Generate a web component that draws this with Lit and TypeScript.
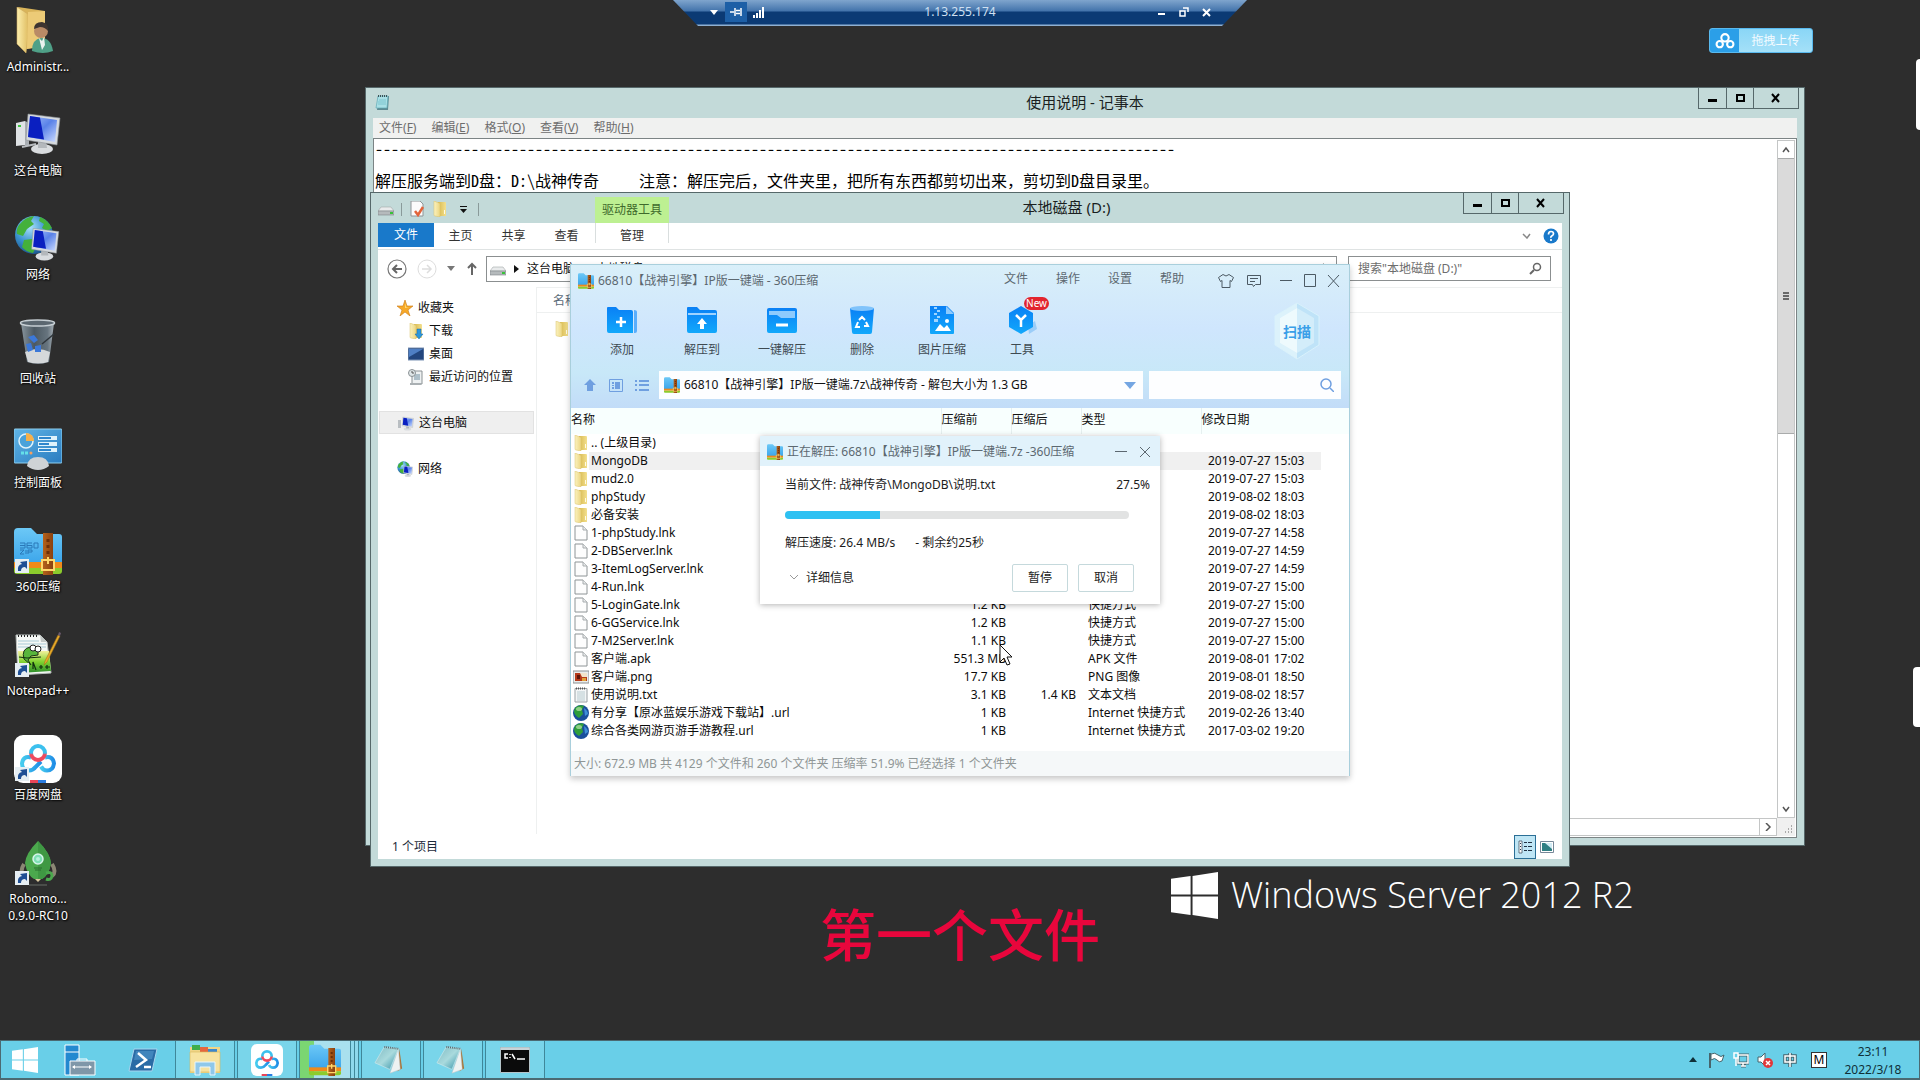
import { LitElement, html, svg, css, nothing, TemplateResult } from "lit";
import { customElement } from "lit/decorators.js";
import { classMap } from "lit/directives/class-map.js";

/* ---------- shared styles ---------- */

const base = css`
  * { box-sizing: border-box; }
  :host {
    display: block;
    font: 12px/16px "Noto Sans", "Noto Sans CJK SC", sans-serif;
    color: #111;
  }
  button {
    font: inherit;
    color: inherit;
    background: none;
    border: 0;
    padding: 0;
    margin: 0;
    display: flex;
    align-items: center;
    justify-content: center;
  }
  input, textarea { font: inherit; color: inherit; border: 0; outline: 0; padding: 0; margin: 0; background: none; }
  svg { display: block; flex: none; }
`;

const frame = css`
  .window {
    height: 100%;
    display: flex;
    flex-direction: column;
    background: #c3dad9;
    border: 1px solid #56686a;
    padding: 0 7px 7px;
  }
  .title {
    flex: none;
    position: relative;
    height: 30px;
    padding-bottom: 2px;
    display: flex;
    align-items: center;
    justify-content: center;
    font-size: 15px;
    line-height: 20px;
    color: #1a1f1f;
  }
  .caption {
    position: absolute;
    top: 0;
    right: -2px;
    display: flex;
    border: 1px solid #56686a;
    border-top: 0;
  }
  .caption button { width: 27px; height: 20px; border-right: 1px solid #56686a; }
  .caption button:first-child { width: 28px; }
  .caption button:last-child { width: 44px; border-right: 0; }
`;

/* ---------- icons ---------- */

const pic = (w: number, h: number, vb: string, body: TemplateResult | TemplateResult[]) =>
  html`<svg width=${w} height=${h} viewBox=${vb} aria-hidden="true">${body}</svg>`;

const captionButtons = () => html`
  <div class="caption">
    <button aria-label="最小化">${pic(11, 12, "0 0 11 12", svg`<path d="M1 7h9v3H1z" fill="#000"/>`)}</button>
    <button aria-label="最大化">${pic(12, 12, "0 0 12 12", svg`<path d="M3 3h7v6H3z" fill="none" stroke="#000" stroke-width="2"/>`)}</button>
    <button aria-label="关闭">${pic(12, 12, "0 0 12 12", svg`<path d="M2 2l7 8M9 2l-7 8" stroke="#000" stroke-width="2"/>`)}</button>
  </div>`;

const zipBody = svg`
  <defs>
    <linearGradient id="zipBlue" x1="0" y1="0" x2="0" y2="1"><stop offset="0" stop-color="#6cc8f6"/><stop offset="1" stop-color="#3aa4ea"/></linearGradient>
    <linearGradient id="zipBelt" x1="0" y1="0" x2="1" y2="0"><stop offset="0" stop-color="#b4611b"/><stop offset="1" stop-color="#8a4210"/></linearGradient>
  </defs>
  <path d="M0 5q0-4 4-4h13l6 6h22q3 0 3 3v28H0z" fill="url(#zipBlue)"/>
  <path d="M0 35h48v6H0z" fill="#f08a1a"/>
  <path d="M0 41h48v3q0 3-3 3H3q-3 0-3-3z" fill="#8ccc2c"/>
  <path d="M29 6h10v42H29z" fill="url(#zipBelt)"/>
  <path d="M34 12v3M34 18v3M34 24v3" stroke="#6d2f08" stroke-width="3"/>
  <path d="M28 33h12v10H28zM34 30v7" fill="none" stroke="#ffd76a" stroke-width="2"/>`;

const zipIcon = (s: number) => pic(s, s, "0 0 48 48", zipBody);

const baiduRings = svg`
  <defs>
    <linearGradient id="bdRing" x1="0" y1="0" x2="0" y2="1"><stop offset="0" stop-color="#3cc0ee"/><stop offset=".5" stop-color="#3cc0ee"/><stop offset=".62" stop-color="#ee4a5e"/><stop offset="1" stop-color="#ee4a5e"/></linearGradient>
    <linearGradient id="bdWing" x1="0" y1="0" x2="1" y2="0"><stop offset="0" stop-color="#46cbee"/><stop offset="1" stop-color="#1f8de6"/></linearGradient>
  </defs>
  <path d="M17 22.500q-8-2-9 6q0 7 7 7q4 0 7-4l5-5" fill="none" stroke="url(#bdWing)" stroke-width="4"/>
  <path d="M31 22.500q8-2 9 6q-1 7-7 7q-4 0-6-4" fill="none" stroke="url(#bdWing)" stroke-width="4"/>
  <circle cx="24" cy="18" r="7" fill="none" stroke="url(#bdRing)" stroke-width="4"/>`;

const baiduBody = svg`
  <rect width="48" height="48" rx="9" fill="#fff"/>
  ${baiduRings}
  <path d="M16 45h8v3h-8z" fill="#ea4558"/><path d="M24 45h8v3h-8z" fill="#2b7de0"/>`;

const shortcut = svg`
  <path d="M1 32h14v14H1z" fill="#e6eef3"/>
  <path d="M4 44q-1-6 4-7l-2-2l7-1v8l-2-2q-4 0-4 4z" fill="#1f4f94"/>`;

const monitor = svg`
  <defs>
    <linearGradient id="screen" x1="0" y1="0" x2="1" y2="1"><stop offset="0" stop-color="#a9c4ff"/><stop offset=".5" stop-color="#5a82e8"/><stop offset="1" stop-color="#cddcff"/></linearGradient>
  </defs>
  <ellipse cx="28" cy="38" rx="11" ry="5" fill="#d9dcdf"/>
  <path d="M24 30h8l1 7h-9z" fill="#b4b8bc"/>
  <path d="M14 3l32 4l-3 27l-31-5z" fill="#d6dade" stroke="#8c9196" stroke-width=".6"/>
  <path d="M16 5l27 4l-2 22l-27-5z" fill="url(#screen)"/>
  <path d="M16 5l10 1.500l4 22l-16-2.500z" fill="#0a1fc0"/>`;

const globe = svg`
  <defs><radialGradient id="sea" cx=".4" cy=".3" r=".8"><stop offset="0" stop-color="#a8e0fa"/><stop offset=".5" stop-color="#3b93cf"/><stop offset="1" stop-color="#12467e"/></radialGradient></defs>
  <circle cx="20" cy="20" r="19" fill="url(#sea)"/>
  <path d="M5 10q6-8 15-9l-3 5l3 3l-7 5l-4 7l-6-2q-1-5 2-9zM26 2q8 3 12 11l-5 3l-5-3l2-4l-5-3zM10 25l8-1l5 6l-4 8q-7-1-11-6z" fill="#44b13b"/>`;

const folderBody = svg`
  <defs>
    <linearGradient id="foldFront" x1="0" y1="0" x2="1" y2="0"><stop offset="0" stop-color="#fbf2bf"/><stop offset="1" stop-color="#ecd681"/></linearGradient>
    <linearGradient id="foldBack" x1="0" y1="0" x2="1" y2="0"><stop offset="0" stop-color="#d8b94f"/><stop offset="1" stop-color="#f3e08e"/></linearGradient>
  </defs>
  <path d="M6 1h7q1 0 1 1v13H6z" fill="url(#foldBack)"/>
  <path d="M2 0l5 2q1 0 1 1v13l-5-1q-1 0-1-1z" fill="url(#foldFront)" stroke="#d9c069" stroke-width=".5"/>
  <path d="M12 9h1v4h-1z" fill="#fffbe4"/>`;

const desktopPics: Record<string, TemplateResult> = {
  user: svg`
    <defs><linearGradient id="ufold" x1="0" y1="0" x2="1" y2="0"><stop offset="0" stop-color="#fcefae"/><stop offset="1" stop-color="#e0bd62"/></linearGradient></defs>
    <path d="M4 0l27 4v36l-19 2z" fill="#d9b45a"/>
    <path d="M3 0l11 7q1 20-2 39l-9-9z" fill="url(#ufold)" stroke="#cda95c" stroke-width=".6"/>
    <path d="M14 5l17-1v34l-18 4z" fill="#eccb77"/>
    <path d="M18 44q0-12 9-13q10 0 12 13q-10 4-21 0z" fill="#4fa087"/>
    <path d="M25 31l3 3l2-4l1 8l-3 5z" fill="#e9f2ee"/>
    <circle cx="27" cy="24" r="7" fill="#b98b66"/>
    <path d="M20 22q0-7 8-7q7 1 6 9q-3-4-8-4z" fill="#3d3430"/>`,
  pc: svg`
    <path d="M2 12l9-2v24l-9 1z" fill="#dfe2e5"/><path d="M11 10l4 2v22l-4 1z" fill="#a9aeb3"/>
    <path d="M4 15h3" stroke="#3ec43e" stroke-width="2"/><path d="M8 36l14-3" stroke="#b8bcc0" stroke-width="2"/>
    ${monitor}`,
  net: svg`
    ${globe}<g transform="translate(8 11) scale(.8)">${monitor}</g>`,
  bin: svg`
    <defs><linearGradient id="glass" x1="0" y1="0" x2="1" y2="0"><stop offset="0" stop-color="#93a1aa"/><stop offset=".4" stop-color="#4f5d67"/><stop offset=".8" stop-color="#6d7c87"/><stop offset="1" stop-color="#b2bcc3"/></linearGradient></defs>
    <path d="M7 4h33l-5 39q-11 4-22 0z" fill="url(#glass)" opacity=".9"/>
    <path d="M11 33q12-6 25 0l-2 10q-10 3-20 0z" fill="#d5d8da"/>
    <ellipse cx="23.500" cy="4" rx="17" ry="3" fill="#5b6770" stroke="#c6ced3" stroke-width="1.500"/>
    <path d="M14 18l6-2l4 5l-4 3zM12 25l5-1l2 7l-5 2zM21 27l6-1v7h-6z" fill="#3c78d8"/>
    <path d="M40 15l-12 10" stroke="#2f363b" stroke-width="1.500"/>`,
  panel: svg`
    <defs><linearGradient id="cp" x1="0" y1="0" x2="1" y2="1"><stop offset="0" stop-color="#5fb4e6"/><stop offset="1" stop-color="#2a7cc0"/></linearGradient></defs>
    <rect x="0" y="6" width="48" height="34" rx="1" fill="url(#cp)" stroke="#8fd0f0"/>
    <circle cx="12" cy="18" r="7" fill="#4aa2da" stroke="#dff2fb" stroke-width="1.500"/>
    <path d="M12 18v-8a8 8 0 0 1 8 8z" fill="#f6b04a"/>
    <path d="M24 15h19M24 21h19M24 27h19" stroke="#dff2fb" stroke-width="4"/>
    <path d="M25 15h12M25 21h10M25 27h12" stroke="#2e86cc" stroke-width="2"/>
    <path d="M7 30h7" stroke="#64e0e8" stroke-width="3" stroke-dasharray="3 1"/><circle cx="17" cy="30" r="1.500" fill="#f6a060"/>
    <path d="M13 43q1-9 11-9t11 9q-5 4-11 4t-11-4z" fill="#cfd3d6"/>`,
  zip: svg`
    ${zipBody}
    <path d="M6 16h5v5H6M6 18.500h5M18 16h-5v5h5v-2.500h-5M20 16h4v5h-4zM6 23h4l-4 4h4M12 23v4M14 27v-4h4v2h-4" fill="none" stroke="#2a78b8"/>
    ${shortcut}`,
  npp: svg`
    <defs><linearGradient id="npg" x1="0" y1="0" x2="0" y2="1"><stop offset="0" stop-color="#f4f19c"/><stop offset=".5" stop-color="#7fd22f"/><stop offset="1" stop-color="#2a8c2c"/></linearGradient></defs>
    <path d="M2 4h24l7 7l4 31l-33 2z" fill="#f6f8f6" stroke="#b9bfbd"/>
    <path d="M26 4l1 7h6z" fill="#c3c9c7"/>
    <path d="M4 5h20" stroke="#222" stroke-width="2" stroke-dasharray="1 2"/>
    <path d="M4 10h21M4 13h28M4 16h28" stroke="#a9cbd6"/>
    <path d="M4 20h31l2 20l-31 2z" fill="url(#npg)"/>
    <path d="M10 28q-3-10 6-12l8 2v6l-7 1l-3 4l3 5z" fill="#58b53c" stroke="#1c3316"/>
    <circle cx="19" cy="17" r="3" fill="#fff" stroke="#222"/><circle cx="24" cy="18" r="3" fill="#fff" stroke="#222"/>
    <path d="M5 26l8 1l14-1M19 38v-7l3 8M25 36h4M31 36h5M27 34v4M33 34v4" fill="none" stroke="#12300f" stroke-width="1.200"/>
    <path d="M44 4l2 1l-13 26l-3 3l1-4z" fill="#e6a92a" stroke="#9c6c14" stroke-width=".5"/><path d="M44 4l1-3l2 1l-1 3z" fill="#6b5a6d"/>
    ${shortcut}`,
  baidu: svg`${baiduBody}${shortcut}`,
  robo: svg`
    <path d="M10 25q-5 8 0 14M38 25q5 8 0 12" fill="none" stroke="#8b8774" stroke-width="4"/>
    <path d="M24 2q12 12 13 22q-2 12-9 16h-8q-7-4-9-16q1-10 13-22z" fill="#4ba84d"/>
    <path d="M24 2q12 12 13 22q-2 12-9 16h-4z" fill="#3f9843"/>
    <circle cx="24" cy="20" r="5" fill="#7fe0b4" stroke="#d8f5ea" stroke-width="1.500"/><circle cx="24" cy="20" r="2" fill="#b9f3da"/>
    <path d="M20 29h8M21 31h6" stroke="#2b6f30"/>
    <path d="M21 40h6l-3 3z" fill="#d9c99e"/>
    <path d="M32 34q6-2 6 3q-1 5-6 3" fill="none" stroke="#4ba84d" stroke-width="3"/>
    <path d="M15 46h18" stroke="#4a4d4a" stroke-width="2"/>
    ${shortcut}`,
};

const small: Record<string, TemplateResult> = {
  folder: folderBody,
  file: svg`<path d="M2 1h8l4 4v10H2z" fill="#fdfdfd" stroke="#8e9496"/><path d="M10 1v4h4" fill="#e9ebec" stroke="#a8adaf"/>`,
  txt: svg`<path d="M2 1.500h12V15H2z" fill="#f4f6f7" stroke="#9aa1a5"/><path d="M3 1.500h10" stroke="#555" stroke-width="2" stroke-dasharray="1 1"/><path d="M4 5h8M4 7h8M4 9h8M4 11h8M4 13h8" stroke="#b8cbd0"/>`,
  png: svg`<path d="M0 2h16v12H0z" fill="#e9ecec" stroke="#8b9193"/><path d="M2 4h12v8H2z" fill="#b53a1a"/><path d="M7 4h7v4H9z" fill="#f2e3c9"/><path d="M4 6h3v4H4z" fill="#5d150a"/><path d="M9 9h4v3H9z" fill="#e0a43b"/>`,
  url: svg`<circle cx="8" cy="8" r="8" fill="#1a4f9c"/><path d="M2 3q4-4 9-2l-2 4l1 4l-4 4q-5-3-5-7z" fill="#2f9e3a"/><path d="M11 3q4 3 4 6l-3 2z" fill="#3f8fd8"/><ellipse cx="6" cy="4" rx="3" ry="2" fill="#b8e6a8" opacity=".7"/>`,
  drive: svg`<path d="M3 6h10l3 4H0z" fill="#e9ebec" stroke="#a2a7a9" stroke-width=".6"/><path d="M0 10h16v4H0z" fill="#b5babc" stroke="#7e8486" stroke-width=".6"/><path d="M12 12h3" stroke="#38c23a" stroke-width="2"/>`,
  star: svg`<path d="M8 0l2 6h6l-5 4l2 6l-5-4l-5 4l2-6l-5-4h6z" fill="#f7a928" stroke="#c97a15" stroke-width=".6"/><path d="M8 3l1 4h3l-4 1z" fill="#ffe07a"/>`,
  download: svg`${folderBody}<path d="M9 6h4v5h2l-4 5l-4-5h2z" fill="#2c97dc" stroke="#1466a4" stroke-width=".5"/>`,
  desktop: svg`<path d="M0 2h16v12H0z" fill="#23467e" stroke="#7d93b5"/><path d="M1 3h14L1 11z" fill="#4f7fc4"/>`,
  recent: svg`<path d="M4 2h10v13H4z" fill="#eef1f2" stroke="#8a9194"/><path d="M6 6h6M6 8h6M6 10h6" stroke="#6f8ea0"/><path d="M2 14h11v2H2z" fill="#aab0b3"/><circle cx="4" cy="4" r="3.500" fill="#dfe6e8" stroke="#8a9194"/><path d="M4 2v2h2" fill="none" stroke="#555"/>`,
  pc: svg`<path d="M0 5h3v8H0z" fill="#b9bec2"/><g transform="translate(0 1) scale(.34)">${monitor}</g>`,
  net: svg`<g transform="scale(.33)">${globe}</g><g transform="translate(3 4) scale(.28)">${monitor}</g>`,
};
const icon16 = (name: string) => pic(16, 16, "0 0 16 16", small[name]);

const easelPad = svg`
  <defs><linearGradient id="easel" x1="0" y1="0" x2="1" y2="1"><stop offset="0" stop-color="#7fb9c2"/><stop offset=".5" stop-color="#a9dadd"/><stop offset="1" stop-color="#2f8fa6"/></linearGradient></defs>
  <path d="M27 4l3 21l-5 3z" fill="#a8763c"/>
  <path d="M26 4l2 22l-11 4z" fill="#eef2f2" stroke="#b9c4c6" stroke-width=".5"/>
  <path d="M11 2l15 2l-9 22l-16-7z" fill="url(#easel)" stroke="#d9ecee" stroke-width=".6"/>
  <path d="M11 2l15 2" stroke="#58666a" stroke-width="2" stroke-dasharray="1 1"/>`;

const notePad = svg`
  <path d="M4 2h10l-1 14H2z" fill="#5f8a92"/>
  <path d="M3 2h10l-1 12H1z" fill="#a9e0e6" stroke="#5fa9b4" stroke-width=".7"/>
  <path d="M4 6h7M3 8h8M3 10h8" stroke="#7cc4ce"/>
  <path d="M3 2h10" stroke="#3e5257" stroke-width="2" stroke-dasharray="1 1"/>`;

const winFlag = (s: number) =>
  pic(s, s, "0 0 48 48", svg`<path d="M0 7l20-3v19H0zM22 4l26-4v23H22zM0 25h20v19L0 41zM22 25h26v23l-26-4z" fill="#fff"/>`);

/* ---------- remote session bar ---------- */

@customElement("session-bar")
export class SessionBar extends LitElement {
  static styles = [base, css`
    .bar {
      height: 26px;
      display: flex;
      align-items: center;
      padding: 0 30px 2px;
      clip-path: polygon(0 0, 100% 0, calc(100% - 25px) 100%, 25px 100%);
      background: linear-gradient(#7fa5cd 0, #4373ab 11px, #0b3a74 12px, #0b3a74 24px, #8fb0d2 25px);
      color: #cfe0f2;
    }
    .group { display: flex; align-items: center; flex: 1; }
    .group.end { justify-content: flex-end; }
    .group button { width: 22px; height: 20px; }
    .group .pinned { background: #1d5fa6; }
  `];
  render() {
    return html`<div class="bar">
      <div class="group">
        <button aria-label="菜单">${pic(8, 5, "0 0 8 5", svg`<path d="M0 0h8L4 5z" fill="#fff"/>`)}</button>
        <button class="pinned" aria-label="固定">${pic(12, 10, "0 0 12 10", svg`<path d="M0 5h4M5 1v8M6 3.500h4M6 6.500h4M11 1v8" stroke="#fff" stroke-width="1.500"/>`)}</button>
        <button aria-label="连接质量">${pic(11, 11, "0 0 11 11", svg`<path d="M1 11V8M4 11V6M7 11V3M10 11V0" stroke="#fff" stroke-width="2"/>`)}</button>
      </div>
      <span>1.13.255.174</span>
      <div class="group end">
        <button aria-label="最小化">${pic(8, 8, "0 0 8 8", svg`<path d="M0 6h7" stroke="#fff" stroke-width="2"/>`)}</button>
        <button aria-label="还原">${pic(10, 10, "0 0 10 10", svg`<path d="M1 4h5v5H1zM4 1h5v4" fill="none" stroke="#fff" stroke-width="1.500"/>`)}</button>
        <button aria-label="关闭">${pic(9, 9, "0 0 9 9", svg`<path d="M1 1l7 7M8 1L1 8" stroke="#fff" stroke-width="2"/>`)}</button>
      </div>
    </div>`;
  }
}

/* ---------- notepad ---------- */

const NOTE = "-".repeat(100) + "\n\n解压服务端到D盘：D:\\战神传奇     注意：解压完后，文件夹里，把所有东西都剪切出来，剪切到D盘目录里。";

@customElement("notepad-window")
export class NotepadWindow extends LitElement {
  static styles = [base, frame, css`
    .appicon { position: absolute; left: 2px; top: 6px; }
    .menu { flex: none; height: 20px; display: flex; align-items: center; gap: 15px; padding-left: 6px; background: #f0f1f0; color: #6d6d6d; }
    .body { flex: 1; display: grid; grid-template: 1fr 18px / 1fr 18px; border: 1px solid #7c8485; background: #fff; padding: 1px; }
    textarea {
      resize: none;
      overflow: hidden;
      white-space: pre;
      color: #000;
      font: 16px/16px "Noto Sans Mono CJK SC", "Liberation Mono", "Noto Sans CJK SC", monospace;
    }
    .vscroll { display: flex; flex-direction: column; border: 1px solid #c4c6c6; }
    .vscroll button { height: 17px; }
    .track { flex: 1; }
    .thumb { height: 43%; background: #dadada; border: 1px solid #a9abab; border-width: 1px 0; display: flex; align-items: center; justify-content: center; }
    .hscroll { display: flex; justify-content: flex-end; border: 1px solid #c4c6c6; }
    .hscroll button { width: 17px; border-left: 1px solid #c4c6c6; }
    .grip { background: #f0f0f0; display: flex; align-items: flex-end; justify-content: flex-end; padding: 2px; }
  `];
  render() {
    const menus = [["文件", "F"], ["编辑", "E"], ["格式", "O"], ["查看", "V"], ["帮助", "H"]];
    return html`<div class="window">
      <div class="title">
        <span class="appicon">${pic(16, 18, "0 0 16 18", notePad)}</span>
        使用说明 - 记事本${captionButtons()}
      </div>
      <div class="menu">${menus.map(([t, k]) => html`<button>${t}(<u>${k}</u>)</button>`)}</div>
      <div class="body">
        <textarea aria-label="文本" wrap="off" spellcheck="false" .value=${NOTE}></textarea>
        <div class="vscroll">
          <button aria-label="向上">${pic(8, 8, "0 0 8 8", svg`<path d="M1 6l3-4l3 4" fill="none" stroke="#555" stroke-width="1.500"/>`)}</button>
          <div class="track"><div class="thumb">${pic(6, 8, "0 0 6 8", svg`<path d="M0 1h6M0 4h6M0 7h6" stroke="#444" stroke-width="1.500"/>`)}</div></div>
          <button aria-label="向下">${pic(8, 8, "0 0 8 8", svg`<path d="M1 2l3 4l3-4" fill="none" stroke="#555" stroke-width="1.500"/>`)}</button>
        </div>
        <div class="hscroll"><button aria-label="向右">${pic(8, 8, "0 0 8 8", svg`<path d="M2 0l4 4l-4 4" fill="none" stroke="#555" stroke-width="1.500"/>`)}</button></div>
        <div class="grip">${pic(9, 9, "0 0 9 9", svg`<path d="M7 1h1M4 4h1M7 4h1M1 7h1M4 7h1M7 7h1" stroke="#aaa" stroke-width="2"/>`)}</div>
      </div>
    </div>`;
  }
}

/* ---------- file explorer ---------- */

@customElement("explorer-window")
export class ExplorerWindow extends LitElement {
  static styles = [base, frame, css`
    .title { padding-left: 291px; padding-right: 98px; }
    .quick { position: absolute; left: 0; top: 8px; display: flex; align-items: center; gap: 7px; }
    .quick i { width: 1px; height: 13px; background: #8a9a9a; }
    .quick button { width: 16px; height: 16px; }
    .context { position: absolute; left: 217px; top: 4px; height: 26px; width: 74px; background: #bdf092; color: #3f6a2c; font-size: 12px; line-height: 26px; text-align: center; }
    .tabs { flex: none; height: 27px; display: flex; align-items: center; background: #fff; border-bottom: 1px solid #dfe3e3; color: #333; }
    .tabs button { width: 53px; height: 24px; }
    .tabs .file { width: 56px; background: #1979ca; color: #fff; align-self: flex-start; }
    .tabs .manage { width: 74px; height: 20px; border: 1px solid #d9dede; border-width: 0 1px; align-self: flex-start; padding-top: 6px; margin-left: 2px; }
    .tabs .right { margin-left: auto; display: flex; align-items: center; gap: 9px; padding-right: 3px; }
    .tabs .right button { width: 16px; }
    .nav { flex: none; display: flex; align-items: center; background: #fff; height: 37px; padding: 0 11px 0 9px; gap: 11px; }
    .moves { display: flex; align-items: center; gap: 10px; margin-right: -4px; }
    .path { flex: 1; height: 26px; border: 1px solid #8b8f90; display: flex; align-items: center; padding: 0 8px 0 3px; gap: 8px; }
    .path button:last-child { margin-left: auto; }
    .search { width: 203px; height: 25px; border: 1px solid #8b8f90; display: flex; align-items: center; padding: 0 8px 0 9px; }
    .search input { flex: 1; min-width: 0; }
    .search input::placeholder { color: #6d6d6d; opacity: 1; }
    .main { flex: 1; display: flex; background: #fff; min-height: 0; }
    .tree { width: 159px; border-right: 1px solid #eef0f0; padding: 9px 2px 0 1px; margin: 0; list-style: none; }
    .tree li { height: 23px; display: flex; align-items: center; gap: 5px; padding-left: 18px; color: #111; }
    .tree .sub { padding-left: 29px; }
    .tree .gap { margin-top: 23px; }
    .tree .here { background: #efefef; border: 1px solid #e2e2e2; padding-left: 18px; }
    .files { flex: 1; }
    .head { height: 26px; border: 1px solid #eef0f0; border-width: 1px 0; padding: 5px 16px; color: #5a6a78; }
    .entry { padding: 8px 17px; }
    .status { flex: none; height: 25px; display: flex; align-items: center; background: #fff; padding-left: 14px; color: #1d2b3a; }
    .status .views { margin-left: auto; display: flex; padding-right: 4px; }
    .status .views button { width: 22px; height: 24px; }
    .status .views .on { background: #bfe6f5; border: 1px solid #2b6f96; }
  `];
  render() {
    const arrow = pic(5, 8, "0 0 5 8", svg`<path d="M0 0v8l5-4z" fill="#111"/>`);
    const tree: [string, string, string][] = [
      ["star", "收藏夹", ""], ["download", "下载", "sub"], ["desktop", "桌面", "sub"], ["recent", "最近访问的位置", "sub"],
      ["pc", "这台电脑", "gap here"], ["net", "网络", "gap"],
    ];
    return html`<div class="window">
      <div class="title">
        <div class="quick">
          ${icon16("drive")}<i></i>
          <button aria-label="属性">${pic(14, 16, "0 0 14 16", svg`<path d="M1 0h9l3 3v12H1z" fill="#fbfbfb" stroke="#8e9496"/><path d="M5 10l3 4l5-8" fill="none" stroke="#e2643a" stroke-width="2.500"/>`)}</button>
          <button aria-label="新建文件夹">${icon16("folder")}</button>
          <button aria-label="自定义">${pic(7, 7, "0 0 7 7", svg`<path d="M0 .500h7" stroke="#111"/><path d="M0 3h7L3.500 7z" fill="#111"/>`)}</button>
          <i></i>
        </div>
        <span class="context">驱动器工具</span>
        本地磁盘 (D:)${captionButtons()}
      </div>
      <div class="tabs">
        <button class="file">文件</button>
        <button>主页</button><button>共享</button><button>查看</button>
        <button class="manage">管理</button>
        <div class="right">
          <button aria-label="展开功能区">${pic(9, 6, "0 0 9 6", svg`<path d="M1 1l4 4l3-4" fill="none" stroke="#888" stroke-width="1.500"/>`)}</button>
          <button aria-label="帮助">${pic(16, 16, "0 0 16 16", svg`<circle cx="8" cy="8" r="7.500" fill="#1979ca"/><path d="M5.500 6.500q0-3 2.500-3t2.500 2.300q0 1.200-1.500 2t-1 2M8 11v2" fill="none" stroke="#fff" stroke-width="1.700"/>`)}</button>
        </div>
      </div>
      <div class="nav">
        <div class="moves">
          <button aria-label="后退">${pic(20, 20, "0 0 20 20", svg`<circle cx="10" cy="10" r="9" fill="#fff" stroke="#777" stroke-width="1.200"/><path d="M15 10H6M10 6l-4 4l4 4" fill="none" stroke="#666" stroke-width="2"/>`)}</button>
          <button aria-label="前进">${pic(20, 20, "0 0 20 20", svg`<circle cx="10" cy="10" r="9" fill="#fff" stroke="#ddd"/><path d="M5 10h9M10 6l4 4l-4 4" fill="none" stroke="#ddd" stroke-width="1.500"/>`)}</button>
          <button aria-label="最近位置">${pic(8, 5, "0 0 8 5", svg`<path d="M0 0h8L4 5z" fill="#777"/>`)}</button>
          <button aria-label="向上">${pic(14, 14, "0 0 14 14", svg`<path d="M7 13V2M3 6l4-4l4 4" fill="none" stroke="#666" stroke-width="2"/>`)}</button>
        </div>
        <div class="path">
          ${icon16("drive")}${arrow}<button>这台电脑</button>${arrow}<button>本地磁盘 (D:)</button>
          <button aria-label="刷新">${pic(12, 12, "0 0 12 12", svg`<path d="M10 6a4 4 0 1 1-2-4" fill="none" stroke="#777"/><path d="M7 0v4h4z" fill="#777"/>`)}</button>
        </div>
        <label class="search">
          <input type="text" aria-label="搜索" placeholder='搜索"本地磁盘 (D:)"'>
          ${pic(13, 13, "0 0 13 13", svg`<circle cx="8" cy="5" r="3.500" fill="none" stroke="#666" stroke-width="1.500"/><path d="M5 8l-4 4" stroke="#666" stroke-width="2"/>`)}
        </label>
      </div>
      <div class="main">
        <ul class="tree">${tree.map(([i, t, c]) => html`<li class=${c}>${icon16(i)}${t}</li>`)}</ul>
        <div class="files"><div class="head">名称</div><div class="entry">${icon16("folder")}</div></div>
      </div>
      <div class="status">
        <span>1 个项目</span>
        <div class="views">
          <button class="on" aria-label="详细信息">${pic(15, 14, "0 0 15 14", svg`<path d="M1 1h3v12H1z" fill="#fff" stroke="#456" stroke-width=".8"/><path d="M6 2.500h3M10 2.500h4M6 6.500h3M10 6.500h4M6 10.500h3M10 10.500h4M2 3.500h1M2 6.500h1M2 9.500h1" stroke="#234"/>`)}</button>
          <button aria-label="大缩略图">${pic(14, 12, "0 0 14 12", svg`<path d="M.500 .500h13v11H.500z" fill="#fff" stroke="#789"/><path d="M2 2h10v8H2z" fill="#2f7f83"/><path d="M5 2h7v6z" fill="#d2ecf5"/>`)}</button>
        </div>
      </div>
    </div>`;
  }
}

/* ---------- archive window ---------- */

interface Entry { icon: string; name: string; size?: string; packed?: string; type?: string; date?: string; selected?: boolean; }

const ENTRIES: Entry[] = [
  { icon: "folder", name: ".. (上级目录)" },
  { icon: "folder", name: "MongoDB", date: "2019-07-27 15:03", selected: true },
  { icon: "folder", name: "mud2.0", date: "2019-07-27 15:03" },
  { icon: "folder", name: "phpStudy", date: "2019-08-02 18:03" },
  { icon: "folder", name: "必备安装", date: "2019-08-02 18:03" },
  { icon: "file", name: "1-phpStudy.lnk", date: "2019-07-27 14:58" },
  { icon: "file", name: "2-DBServer.lnk", date: "2019-07-27 14:59" },
  { icon: "file", name: "3-ItemLogServer.lnk", date: "2019-07-27 14:59" },
  { icon: "file", name: "4-Run.lnk", date: "2019-07-27 15:00" },
  { icon: "file", name: "5-LoginGate.lnk", size: "1.2 KB", type: "快捷方式", date: "2019-07-27 15:00" },
  { icon: "file", name: "6-GGService.lnk", size: "1.2 KB", type: "快捷方式", date: "2019-07-27 15:00" },
  { icon: "file", name: "7-M2Server.lnk", size: "1.1 KB", type: "快捷方式", date: "2019-07-27 15:00" },
  { icon: "file", name: "客户端.apk", size: "551.3 MB", type: "APK 文件", date: "2019-08-01 17:02" },
  { icon: "png", name: "客户端.png", size: "17.7 KB", type: "PNG 图像", date: "2019-08-01 18:50" },
  { icon: "txt", name: "使用说明.txt", size: "3.1 KB", packed: "1.4 KB", type: "文本文档", date: "2019-08-02 18:57" },
  { icon: "url", name: "有分享【原冰蓝娱乐游戏下载站】.url", size: "1 KB", type: "Internet 快捷方式", date: "2019-02-26 13:40" },
  { icon: "url", name: "综合各类网游页游手游教程.url", size: "1 KB", type: "Internet 快捷方式", date: "2017-03-02 19:20" },
];

const azure = svg`<defs><linearGradient id="az" x1="0" y1="0" x2="0" y2="1"><stop offset="0" stop-color="#0a80f5"/><stop offset="1" stop-color="#12a8fb"/></linearGradient></defs>`;

const TOOLS: { label: string; art: TemplateResult; badge?: string }[] = [
  { label: "添加", art: svg`<path d="M1 2q0-1 1-1h8l3 3h12q2 0 2 2v21H3q-2 0-2-2z" fill="url(#az)"/><path d="M28 4q3 0 3 2v19q0 2-2 2h-1z" fill="#5aaefc"/><path d="M15 11v10M10 16h10" stroke="#fff" stroke-width="2.500"/>` },
  { label: "解压到", art: svg`<path d="M1 2q0-1 1-1h9l3 3h15q2 0 2 2v19q0 2-2 2H3q-2 0-2-2z" fill="url(#az)"/><path d="M2 8h28" stroke="#9fd2ff" stroke-width="2"/><path d="M16 12l5 6h-3v5h-4v-5h-3z" fill="#fff"/>` },
  { label: "一键解压", art: svg`<path d="M1 4q0-2 2-2h26q2 0 2 2v21q0 2-2 2H3q-2 0-2-2z" fill="url(#az)"/><path d="M3 5h26v7H15l-4-3H3z" fill="#8dcafd"/><path d="M10 19h12" stroke="#fff" stroke-width="3"/>` },
  { label: "删除", art: svg`<path d="M4 2h24l-2 24q0 2-2 2H8q-2 0-2-2z" fill="url(#az)"/><ellipse cx="16" cy="2.500" rx="12" ry="2.500" fill="#80c3fb"/><path d="M13 14l3-3l3 3M20 16l2 4h-4M14 21h-4l2-5" fill="none" stroke="#fff" stroke-width="2"/>` },
  { label: "图片压缩", art: svg`<path d="M4 0h17l7 7v20q0 1-1 1H5q-1 0-1-1z" fill="url(#az)"/><path d="M20 0l8 8h-8z" fill="#8dcafd"/><path d="M8 1h3v2H8zM11 4h3v2h-3zM8 7h3v2H8zM11 10h3v2h-3zM8 13h4v3H8z" fill="#9fd5ff"/><path d="M9 25l5-7l4 4l3-3l4 6z" fill="#fff"/><circle cx="21" cy="15" r="2" fill="#fff"/>` },
  { label: "工具", badge: "New", art: svg`<path d="M22 20l7-5l2 8l-8 5z" fill="#9bcdf8"/><path d="M15 0l12 7v14l-12 7L3 21V7z" fill="url(#az)"/><path d="M10 9l5 5l5-5M15 14v7" fill="none" stroke="#fff" stroke-width="2.500"/>` },
];

@customElement("archive-window")
export class ArchiveWindow extends LitElement {
  static styles = [base, css`
    .window { height: 100%; display: flex; flex-direction: column; background: #fff; border: 1px solid #a9cfdc; border-bottom: 0; box-shadow: 0 3px 6px rgba(0, 0, 0, .22); }
    .top { flex: none; display: flex; flex-direction: column; height: 143px; background: linear-gradient(#d9eff9, #cfe6fd 45%, #c8e8f8 75%, #c2dcf8); color: #5c6870; }
    .titlebar { display: flex; align-items: center; height: 32px; padding: 0 7px; gap: 4px; }
    .titlebar nav { margin-left: auto; display: flex; gap: 28px; padding: 0 30px 4px 0; }
    .sys { display: flex; gap: 8px; }
    .sys button { width: 16px; height: 16px; }
    .sys button:nth-child(1) { margin-right: 4px; }
    .sys button:nth-child(2) { margin-right: 8px; }
    .tools { display: flex; align-items: flex-start; padding: 9px 28px 0 11px; }
    .tool { position: relative; width: 80px; flex-direction: column; gap: 8px; color: #3e4a52; }
    .badge { position: absolute; left: 42px; top: -9px; width: 25px; height: 13px; border-radius: 7px; background: #e2252f; color: #fff; font-size: 10px; line-height: 13px; }
    .scan { position: relative; margin: -4px 0 0 auto; width: 48px; height: 58px; color: #3a9fe8; font: bold 14px/20px "Noto Sans CJK SC", sans-serif; }
    .scan svg { position: absolute; inset: 0; }
    .scan span { position: relative; }
    .where { display: flex; align-items: center; gap: 6px; margin-top: auto; padding: 0 8px 9px; }
    .views { display: flex; gap: 8px; padding: 0 2px; }
    .views button { width: 18px; height: 18px; }
    .box { height: 28px; background: #fdfeff; display: flex; align-items: center; padding: 0 7px 0 5px; gap: 4px; color: #111; }
    .box input { flex: 1; min-width: 0; }
    .box.path { flex: 1; }
    .box.find { width: 192px; }
    table { border-collapse: collapse; table-layout: fixed; width: 100%; }
    th { height: 26px; padding: 0 0 2px; font-weight: 400; text-align: left; background: #f8fffe; border-left: 1px solid #e6f0f0; }
    th:first-child, th:last-child { border-left: 0; }
    td { height: 18px; padding: 0 5px 0 0; line-height: 18px; white-space: nowrap; color: #0c0c0c; }
    td.num { text-align: right; }
    td.kind { padding-left: 7px; }
    .name { display: flex; align-items: center; gap: 2px; padding-left: 2px; }
    .on td { background: #f0f0f0; }
    .on td:first-child { background: linear-gradient(to right, #fff 18px, #f0f0f0 18px); }
    .on td:last-child { background: none; }
    .c-num { width: 70px; } .c-kind { width: 120px; } .c-end { width: 28px; }
    .status { flex: none; margin-top: auto; height: 25px; padding: 0 3px; line-height: 26px; background: #f5f8f9; color: #8f9696; }
  `];
  render() {
    return html`<div class="window">
      <div class="top">
        <div class="titlebar">
          ${zipIcon(16)}<span>66810【战神引擎】IP版一键端 - 360压缩</span>
          <nav>${["文件", "操作", "设置", "帮助"].map((m) => html`<button>${m}</button>`)}</nav>
          <div class="sys">
            <button aria-label="皮肤">${pic(16, 16, "0 0 16 16", svg`<path d="M5 1.500q3 3 6 0l4.500 3l-2 4l-1.500-1v7H4v-7l-1.500 1l-2-4z" fill="none" stroke="#4c5a64"/>`)}</button>
            <button aria-label="反馈">${pic(16, 16, "0 0 16 16", svg`<path d="M1.500 2.500h13v9h-5l-2 2l-1-2h-5zM4 5.500h8M4 8.500h5" fill="none" stroke="#4c5a64"/>`)}</button>
            <button aria-label="最小化">${pic(16, 16, "0 0 16 16", svg`<path d="M2 7.500h12" stroke="#4c5a64"/>`)}</button>
            <button aria-label="最大化">${pic(16, 16, "0 0 16 16", svg`<path d="M2.500 1.500h11v12h-11z" fill="none" stroke="#4c5a64"/>`)}</button>
            <button aria-label="关闭">${pic(16, 16, "0 0 16 16", svg`<path d="M2 2l11 12M13 2L2 14" stroke="#4c5a64"/>`)}</button>
          </div>
        </div>
        <div class="tools">
          ${TOOLS.map((t) => html`<button class="tool">${pic(32, 28, "0 0 32 28", svg`${azure}${t.art}`)}${t.badge ? html`<span class="badge">${t.badge}</span>` : nothing}${t.label}</button>`)}
          <button class="scan">
            ${pic(48, 58, "0 0 48 58", svg`<path d="M24 1l22 13v29L24 57L2 43V14z" fill="#bfe3f8" stroke="#d9f2fc"/><path d="M24 1v56L2 43V14z" fill="#dcf2fb"/><path d="M24 6l17 10v25L24 51L7 41V16z" fill="#d3edfa"/><path d="M24 6v45L7 41V16z" fill="#eefafd"/>`)}
            <span>扫描</span>
          </button>
        </div>
        <div class="where">
          <div class="views">
            <button aria-label="上一级">${pic(14, 14, "0 0 14 14", svg`<path d="M7 1l6 6h-3v6H4V7H1z" fill="#6f9fe0"/>`)}</button>
            <button aria-label="预览">${pic(14, 13, "0 0 14 13", svg`<path d="M.500 .500h13v12H.500z" fill="none" stroke="#6f9fe0"/><path d="M3 3h2v2H3zM3 6h2v1H3zM3 8h2v2H3zM6 3h5v7H6z" fill="#6f9fe0"/>`)}</button>
            <button aria-label="列表">${pic(14, 13, "0 0 14 13", svg`<path d="M0 2h2M4 2h10M0 6h2M4 6h10M0 11h2M4 11h10" stroke="#6f9fe0" stroke-width="2"/>`)}</button>
          </div>
          <div class="box path">
            ${zipIcon(16)}
            <input type="text" aria-label="路径" .value=${"66810【战神引擎】IP版一键端.7z\\战神传奇 - 解包大小为 1.3 GB"}>
            <button aria-label="历史路径">${pic(12, 7, "0 0 12 7", svg`<path d="M0 0h12L6 7z" fill="#74a6e2"/>`)}</button>
          </div>
          <label class="box find">
            <input type="text" aria-label="查找">
            ${pic(14, 14, "0 0 14 14", svg`<circle cx="6" cy="6" r="5" fill="none" stroke="#6f9fe0" stroke-width="1.500"/><path d="M10 10l4 4" stroke="#6f9fe0" stroke-width="1.500"/>`)}
          </label>
        </div>
      </div>
      <table>
        <colgroup><col><col class="c-num"><col class="c-num"><col class="c-kind"><col class="c-kind"><col class="c-end"></colgroup>
        <thead><tr><th>名称</th><th>压缩前</th><th>压缩后</th><th>类型</th><th>修改日期</th><th></th></tr></thead>
        <tbody>
          ${ENTRIES.map((e) => html`<tr class=${classMap({ on: !!e.selected })}>
            <td><div class="name">${icon16(e.icon)}${e.name}</div></td>
            <td class="num">${e.size}</td><td class="num">${e.packed}</td>
            <td class="kind">${e.type}</td><td class="kind">${e.date}</td><td></td>
          </tr>`)}
        </tbody>
      </table>
      <div class="status">大小: 672.9 MB 共 4129 个文件和 260 个文件夹 压缩率 51.9% 已经选择 1 个文件夹</div>
    </div>`;
  }
}

/* ---------- extraction dialog ---------- */

@customElement("extract-dialog")
export class ExtractDialog extends LitElement {
  static styles = [base, css`
    .dialog { height: 100%; display: flex; flex-direction: column; background: #fff; box-shadow: 0 1px 6px rgba(0, 0, 0, .3); }
    .bar { flex: none; height: 30px; display: flex; align-items: center; gap: 4px; padding: 2px 7px 0; background: #e1f2fb; color: #5c6870; }
    .sys { margin-left: auto; display: flex; gap: 8px; }
    .sys button { width: 16px; height: 16px; }
    .body { flex: 1; display: flex; flex-direction: column; padding: 11px 26px 12px 25px; color: #1c1c1c; }
    .row { display: flex; align-items: center; }
    .file { justify-content: space-between; margin-right: -16px; }
    progress { appearance: none; display: block; width: 344px; height: 8px; border-radius: 4px; overflow: hidden; margin: 18px 0 16px; border: 0; background: #e2e3e3; }
    progress::-webkit-progress-bar { background: #e2e3e3; }
    progress::-webkit-progress-value { background: #2ec1f2; }
    .speed { gap: 20px; }
    .actions { gap: 10px; margin-top: auto; }
    .more { gap: 7px; padding-left: 5px; margin-right: auto; }
    .actions .act { width: 56px; height: 28px; border: 1px solid #c5d9dc; border-radius: 2px; background: #fff; }
  `];
  render() {
    return html`<div class="dialog" role="dialog" aria-label="正在解压">
      <div class="bar">
        ${zipIcon(16)}<span>正在解压: 66810【战神引擎】IP版一键端.7z -360压缩</span>
        <div class="sys">
          <button aria-label="最小化">${pic(12, 12, "0 0 12 12", svg`<path d="M0 5.500h12" stroke="#5c6870"/>`)}</button>
          <button aria-label="关闭">${pic(12, 12, "0 0 12 12", svg`<path d="M1 1l10 10M11 1L1 11" stroke="#5c6870"/>`)}</button>
        </div>
      </div>
      <div class="body">
        <div class="row file"><span>当前文件: 战神传奇\\MongoDB\\说明.txt</span><span>27.5%</span></div>
        <progress max="100" value="27.5" aria-label="解压进度"></progress>
        <div class="row speed"><span>解压速度: 26.4 MB/s</span><span>- 剩余约25秒</span></div>
        <div class="row actions">
          <button class="more">${pic(9, 6, "0 0 9 6", svg`<path d="M0 0l4 4l4-4" fill="none" stroke="#999"/>`)}详细信息</button>
          <button class="act">暂停</button><button class="act">取消</button>
        </div>
      </div>
    </div>`;
  }
}

/* ---------- taskbar ---------- */

@customElement("task-bar")
export class TaskBar extends LitElement {
  static styles = [base, css`
    .bar { height: 40px; display: flex; align-items: stretch; background: #69cfe8; border: 1px solid #4b6a72; border-width: 1px 1px 2px; }
    .bar > button { width: 60px; }
    .bar > .start { width: 48px; }
    .bar > .tool { width: 62px; }
    .bar > .tool.wide { width: 64px; }
    .open { border: 1px solid #3f8799; border-width: 0 1px; background: #79d5ea; margin-right: 2px; }
    .bar > .active { width: 52px; background: linear-gradient(to right, #7bd672 14px, #a9e0ee 14px); margin-right: 0; }
    .stack { width: 4px; border-right: 1px solid #3f8799; background: #8ed9ec; }
    .stack.last { margin-right: 2px; }
    .bar > .pad { padding-right: 4px; }
    .tray { margin-left: auto; display: flex; align-items: center; }
    .tray button { width: 24px; }
    .tray .lang { width: 26px; }
    .tray .ime { width: 16px; height: 16px; margin: 0 4px 0 8px; background: #fff; border: 1px solid #333; color: #000; }
    .clock { width: 88px; padding: 2px 4px 0 0; text-align: center; line-height: 18px; color: #0f3038; }
  `];
  render() {
    const pad = pic(30, 30, "0 0 32 32", easelPad);
    return html`<div class="bar">
      <button class="start" aria-label="开始">${winFlag(26)}</button>
      <button class="tool" aria-label="服务器管理器">${pic(32, 32, "0 0 32 32", svg`<path d="M1 1h14v30H1z" fill="#2389d0" stroke="#fff"/><path d="M1 8h14" stroke="#fff"/><path d="M6 17h25v14H6z" fill="#7f97a8" stroke="#fff"/><path d="M13 17v-2h10v2M9 23h18" fill="none" stroke="#fff"/><path d="M8 23l3-2v4zM28 23l-3-2v4z" fill="#fff"/>`)}</button>
      <button class="tool wide" aria-label="PowerShell">${pic(30, 24, "0 0 30 24", svg`<path d="M6 1h23l-5 22H1z" fill="#2a6ba5" stroke="#a8d4ee"/><path d="M8 3h18l-2 8L6 12z" fill="#4b90c6" opacity=".7"/><path d="M10 5l8 7l-10 7M16 19h7" fill="none" stroke="#fff" stroke-width="2.500"/>`)}</button>
      <button class="open" aria-label="文件资源管理器">${pic(34, 32, "0 0 34 32", svg`<path d="M2 3h30v26H2z" fill="#f0d587"/><path d="M4 1h8v5H4z" fill="#3fae49"/><path d="M12 3h8v5h-8z" fill="#e4663f"/><path d="M20 5h9v4h-9z" fill="#3a87cf"/><path d="M2 8h30v20H2z" fill="#f7e3a0" stroke="#d9b95c" stroke-width=".6"/><path d="M7 31V18h20v13h-5v-8H12v8z" fill="#8fc8ea" stroke="#e8f6fd"/>`)}</button>
      <button class="open" aria-label="百度网盘">${pic(32, 32, "0 0 48 48", baiduBody)}</button>
      <button class="open active" aria-label="360压缩">${pic(32, 32, "0 0 48 48", zipBody)}</button>
      <span class="stack"></span><span class="stack last"></span>
      <button class="open pad" aria-label="使用说明 - 记事本">${pad}</button>
      <button class="open pad" aria-label="记事本">${pad}</button>
      <button class="open" aria-label="命令提示符">${pic(30, 26, "0 0 30 26", svg`<path d="M.500 .500h29v25H.500z" fill="#0b0b0b" stroke="#b5c5ca"/><path d="M1 1h28v2H1z" fill="#c8d4d8"/><path d="M8 7H5v4h3M10 7v1M10 10v1M12 7l3 5M17 12h8" fill="none" stroke="#fff" stroke-width="1.500"/>`)}</button>
      <div class="tray">
        <button aria-label="显示隐藏的图标">${pic(8, 5, "0 0 8 5", svg`<path d="M0 5l4-5l4 5z" fill="#0f3038"/>`)}</button>
        <button aria-label="操作中心">${pic(16, 16, "0 0 16 16", svg`<path d="M1 1v15" stroke="#47646c" stroke-width="2"/><path d="M2 2q4-2 7 1t6 0l-2 6q-3 2-5-1t-6 0z" fill="#fff" stroke="#47646c"/>`)}</button>
        <button aria-label="网络">${pic(16, 16, "0 0 16 16", svg`<path d="M5 3h10v8H5zM8 14h5M10 11v3" fill="none" stroke="#47646c" stroke-width="3"/><path d="M5 3h10v8H5zM8 14h5M10 11v3" fill="none" stroke="#fff" stroke-width="1.500"/><path d="M1 1h4v5H1zM3 6v8" fill="#69cfe8" stroke="#fff" stroke-width="1.500"/>`)}</button>
        <button aria-label="音量">${pic(16, 16, "0 0 16 16", svg`<path d="M1 5h3l4-4v13l-4-4H1z" fill="#fff" stroke="#47646c"/><circle cx="11" cy="11" r="5" fill="#e0383a"/><path d="M9 9l4 4M13 9l-4 4" stroke="#fff" stroke-width="1.500"/>`)}</button>
        <button class="lang" aria-label="输入法">${pic(14, 16, "0 0 14 16", svg`<path d="M2 4h10v6H2zM7 1v14" fill="none" stroke="#47646c" stroke-width="3.500"/><path d="M2 4h10v6H2zM7 1v14" fill="none" stroke="#fff" stroke-width="1.500"/>`)}</button>
        <button class="ime" aria-label="输入模式">M</button>
        <div class="clock">23:11<br>2022/3/18</div>
      </div>
    </div>`;
  }
}

/* ---------- desktop ---------- */

const SHORTCUTS: [string, string[]][] = [
  ["user", ["Administr..."]], ["pc", ["这台电脑"]], ["net", ["网络"]], ["bin", ["回收站"]], ["panel", ["控制面板"]],
  ["zip", ["360压缩"]], ["npp", ["Notepad++"]], ["baidu", ["百度网盘"]], ["robo", ["Robomo...", "0.9.0-RC10"]],
];

@customElement("app-root")
export class AppRoot extends LitElement {
  static styles = [base, css`
    :host { height: 100vh; min-height: 960px; display: flex; flex-direction: column; background: #2d2d2d; overflow: hidden; }
    .desktop { flex: 1; position: relative; min-height: 0; }
    .icons { display: grid; grid-auto-rows: 104px; width: 76px; padding-top: 7px; }
    .icons button { flex-direction: column; justify-content: flex-start; gap: 3px; color: #fff; text-shadow: 1px 1px 2px #000, 0 0 2px #000; line-height: 17px; white-space: nowrap; }
    session-bar, notepad-window, explorer-window, archive-window, extract-dialog, .brand, .subtitle, .upload, .cursor, .edge { position: absolute; }
    session-bar { left: 50%; top: 0; width: 574px; margin-left: -287px; }
    notepad-window { left: 365px; top: 87px; width: 1440px; height: 759px; }
    explorer-window { left: 370px; top: 192px; width: 1200px; height: 675px; }
    archive-window { left: 570px; top: 264px; width: 780px; height: 512px; }
    extract-dialog { left: 760px; top: 436px; width: 400px; height: 168px; }
    .cursor { left: 999px; top: 644px; }
    .brand { left: 1171px; top: 871px; display: flex; align-items: center; gap: 13px; color: #fff; font: 300 36px/48px "Open Sans", "Noto Sans", sans-serif; white-space: nowrap; }
    .subtitle { left: 0; right: 0; top: 890px; text-align: center; margin: 0; color: #e8063c; font: 500 56px/84px "Noto Sans CJK SC", sans-serif; }
    .upload { left: 1709px; top: 28px; width: 104px; height: 25px; border-radius: 3px; overflow: hidden; display: flex; align-items: stretch; border: 1px solid #59b9ee; color: #fff; background: linear-gradient(#8ad6f6, #a4e0f8); }
    .upload .logo { width: 29px; display: flex; align-items: center; justify-content: center; background: #2b9fe8; }
    .upload .label { flex: 1; text-align: center; line-height: 23px; color: #f4fbff; }
    .edge { right: 0; background: #fff; border-radius: 4px 0 0 4px; }
    .edge.upper { top: 59px; height: 71px; width: 4px; }
    .edge.lower { top: 667px; height: 60px; width: 7px; }
  `];
  render() {
    return html`
      <main class="desktop">
        <div class="icons">
          ${SHORTCUTS.map(([art, lines]) => html`<button>${pic(48, 48, "0 0 48 48", desktopPics[art])}<span>${lines.map((l, i) => html`${i ? html`<br>` : nothing}${l}`)}</span></button>`)}
        </div>
        <div class="brand">${winFlag(47)}<span>Windows Server 2012 R2</span></div>
        <session-bar></session-bar>
        <button class="upload"><span class="logo">${pic(20, 18, "5 6 38 34", svg`<circle cx="24" cy="17" r="7" fill="none" stroke="#fff" stroke-width="4"/><circle cx="14" cy="29" r="6" fill="none" stroke="#fff" stroke-width="4"/><circle cx="34" cy="29" r="6" fill="none" stroke="#fff" stroke-width="4"/>`)}</span><span class="label">拖拽上传</span></button>
        <notepad-window></notepad-window>
        <explorer-window></explorer-window>
        <archive-window></archive-window>
        <extract-dialog></extract-dialog>
        <span class="cursor">${pic(13, 22, "0 0 13 22", svg`<path d="M1 1v17l4-4l3 7l3-1l-3-7h5z" fill="#fff" stroke="#111"/>`)}</span>
        <p class="subtitle">第一个文件</p>
        <span class="edge upper"></span><span class="edge lower"></span>
      </main>
      <task-bar></task-bar>`;
  }
}
